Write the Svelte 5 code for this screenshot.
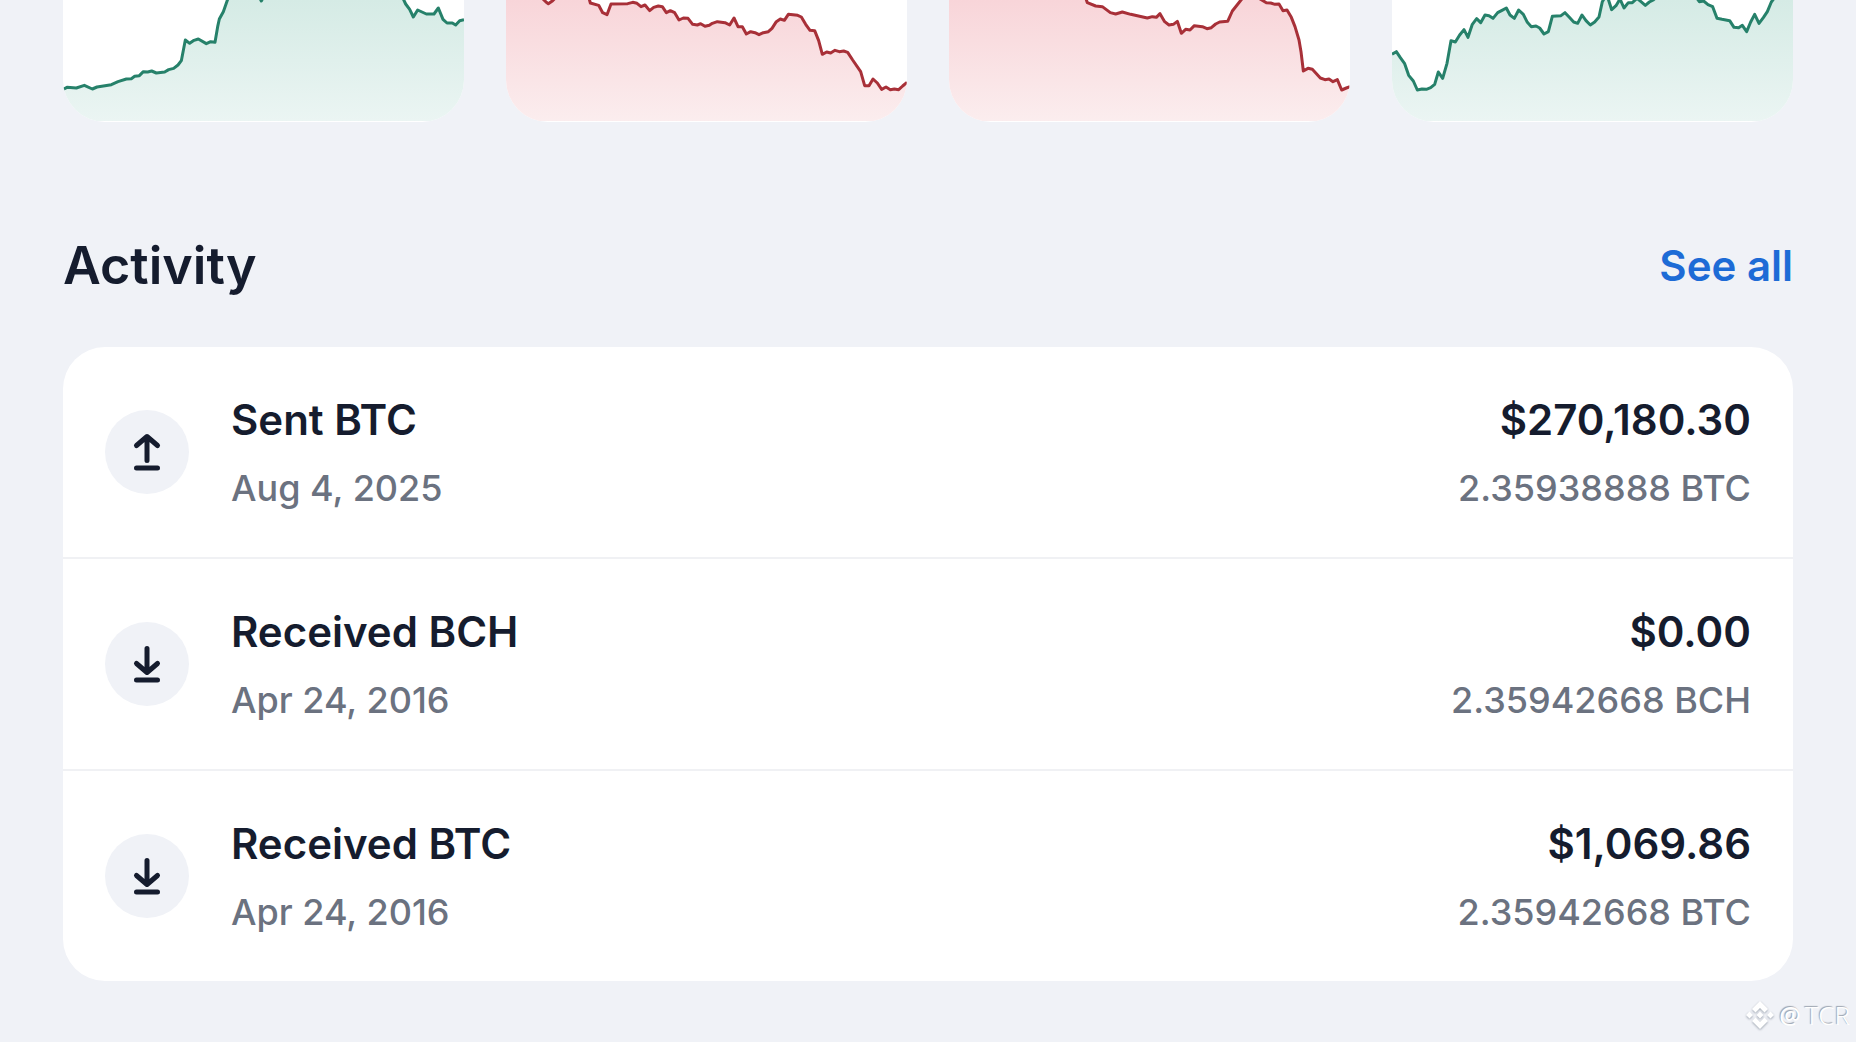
<script lang="ts">
  type Trend = 'up' | 'down'
  type Entry = { kind: 'sent' | 'received'; coin: string; date: string; fiat: string; amount: string }

  // Sparkline vertices, in a 1203 x 363 box. Values above the box are clipped.
  const charts: { name: string; trend: Trend; line: string }[] = [
    {
      name: 'Price chart 1',
      trend: 'up',
      line: '0,268 12,262 40,264 64,256 88,267 102,261 145,254 165,245 190,237 205,236 215,229 229,227 241,215 254,216 266,213 280,219 305,216 317,209 332,205 345,195 355,182 367,120 380,130 393,121 406,117 430,131 443,125 456,127 464,80 469,57 481,35 494,-2 510,-30 585,-16 595,3 605,-16 1010,-30 1020,-5 1028,12 1040,28 1051,51 1064,30 1090,42 1113,42 1126,24 1140,58 1152,69 1168,69 1178,75 1190,62 1203,59'
    },
    {
      name: 'Price chart 2',
      trend: 'down',
      line: '0,-30 108,-6 120,6 127,11 140,2 150,-8 245,-20 253,9 278,16 290,38 303,44 315,12 365,11 380,7 393,10 405,20 417,15 431,32 443,22 457,18 469,20 481,38 493,32 506,38 519,60 532,54 546,55 560,73 574,75 584,71 597,79 610,76 619,70 634,65 657,68 671,75 684,54 696,80 709,80 721,102 734,95 747,98 759,104 772,98 787,95 798,85 811,65 823,57 835,61 847,43 875,46 886,51 899,73 912,91 926,92 938,122 949,163 962,156 974,159 987,151 1000,155 1013,153 1025,157 1040,180 1064,215 1076,257 1089,257 1101,237 1114,249 1127,268 1140,261 1153,269 1165,267 1178,269 1190,258 1203,247'
    },
    {
      name: 'Price chart 3',
      trend: 'down',
      line: '0,-40 405,-20 415,8 440,18 460,20 484,38 500,42 520,36 545,43 595,54 610,50 622,52 633,41 647,65 660,75 673,73 685,64 697,100 710,88 723,90 736,77 760,80 774,86 787,83 800,72 812,66 836,64 850,33 876,0 890,-15 925,-8 952,8 965,9 978,13 990,12 1002,32 1014,30 1027,52 1038,80 1050,120 1056,155 1063,213 1077,205 1090,208 1114,234 1128,239 1140,237 1152,245 1165,239 1178,270 1192,264 1203,260'
    },
    {
      name: 'Price chart 4',
      trend: 'up',
      line: '0,163 13,155 25,173 38,191 50,226 64,243 76,270 90,267 103,268 116,263 128,253 139,216 152,235 165,190 177,122 190,126 203,105 216,89 228,112 241,73 254,56 266,68 279,45 291,47 303,55 317,38 330,31 343,24 354,45 367,55 380,30 394,43 406,67 418,80 432,78 443,84 456,102 469,95 481,49 507,47 519,38 532,52 545,66 557,70 570,45 582,62 595,75 608,66 621,51 631,5 640,-10 648,-5 659,29 672,17 684,-3 696,24 709,8 721,8 735,-5 747,5 760,16 772,6 784,0 800,-15 910,-12 922,5 935,3 948,14 962,20 975,55 990,58 1013,62 1026,82 1040,83 1051,76 1064,95 1076,66 1088,43 1101,70 1114,53 1126,35 1138,6 1150,-10 1203,-10'
    }
  ]

  const entries: Entry[] = [
    { kind: 'sent', coin: 'BTC', date: 'Aug 4, 2025', fiat: '$270,180.30', amount: '2.35938888' },
    { kind: 'received', coin: 'BCH', date: 'Apr 24, 2016', fiat: '$0.00', amount: '2.35942668' },
    { kind: 'received', coin: 'BTC', date: 'Apr 24, 2016', fiat: '$1,069.86', amount: '2.35942668' }
  ]

  const label = (e: Entry) => `${e.kind === 'sent' ? 'Sent' : 'Received'} ${e.coin}`
</script>

<main>
  <section class="charts" aria-label="Prices">
    {#each charts as c, i (c.name)}
      <div class="chart {c.trend}">
        <svg viewBox="0 0 1203 363" preserveAspectRatio="none" role="img" aria-label={c.name}>
          <defs>
            <linearGradient id="fade-{i}" x1="0" y1="0" x2="0" y2="363" gradientUnits="userSpaceOnUse">
              <stop class="from" offset="0" />
              <stop class="to" offset="1" />
            </linearGradient>
          </defs>
          <polygon points="0,363 {c.line} 1203,363" fill="url(#fade-{i})" />
          <polyline points={c.line} />
        </svg>
      </div>
    {/each}
  </section>

  <section>
    <header>
      <h2>Activity</h2>
      <a href="#activity">See all</a>
    </header>

    <ul>
      {#each entries as e, i (i)}
        <li>
          <span class="ic">
            <svg width="42" height="42" viewBox="0 0 42 42" fill="none" stroke="currentColor" stroke-width="5" stroke-linecap="round" stroke-linejoin="round" aria-hidden="true">
              {#if e.kind === 'sent'}
                <path d="M21 29.5V6M10.500 14.500L21 5.500l10.500 9M10.500 37h21" />
              {:else}
                <path d="M21 5.500V29M10.500 20.500L21 29.500l10.500-9M10.500 37h21" />
              {/if}
            </svg>
          </span>
          <div class="col">
            <span class="main">{label(e)}</span>
            <span class="sub">{e.date}</span>
          </div>
          <div class="col end">
            <span class="main">{e.fiat}</span>
            <span class="sub">{e.amount} {e.coin}</span>
          </div>
        </li>
      {/each}
    </ul>
  </section>

  <div class="mark">
    <svg width="30" height="30" viewBox="0 0 30 30" aria-hidden="true">
      <path d="M15 1l8 8-3.500 3.500L15 8l-4.500 4.500L7 9zM15 29l8-8-3.500-3.500L15 22l-4.500-4.500L7 21zM15 11.500l3.500 3.500-3.500 3.500-3.500-3.500zM4.500 11.500L8 15l-3.500 3.500L1 15zM25.500 11.500L29 15l-3.500 3.500L22 15z" />
    </svg>
    <span class="at">@</span>
    <span>TCR</span>
  </div>
</main>

<style>
  :global(body) {
    margin: 0;
    background: #f0f2f7;
  }
  main {
    position: relative;
    padding: 0 63px 61px;
    font-family: Inter, 'Liberation Sans', sans-serif;
    color: #151c2e;
  }
  .charts {
    display: grid;
    grid-template-columns: repeat(4, 1fr);
    gap: 42px;
  }
  .chart {
    height: 121px;
    padding-bottom: 1px;
    overflow: hidden;
    background: #fff;
    border-radius: 0 0 42px 42px;
  }
  .chart svg {
    display: block;
    width: 100%;
    height: 100%;
  }
  .chart polyline {
    fill: none;
    stroke-width: 3px;
    stroke-linejoin: round;
    vector-effect: non-scaling-stroke;
  }
  .up polyline { stroke: #26816a; }
  .up .from { stop-color: #d5ebe5; }
  .up .to { stop-color: #ebf5f3; }
  .down polyline { stroke: #a83038; }
  .down .from { stop-color: #f8d5d9; }
  .down .to { stop-color: #fbedee; }

  header {
    display: flex;
    align-items: center;
    justify-content: space-between;
    margin: 112px 0 49px;
  }
  h2 {
    margin: 0;
    font-size: 52px;
    line-height: 64px;
    font-weight: 600;
  }
  header a {
    font-size: 42px;
    line-height: 64px;
    font-weight: 600;
    color: #1d6bd6;
    text-decoration: none;
  }

  ul {
    margin: 0;
    padding: 0;
    list-style: none;
    background: #fff;
    border-radius: 42px;
  }
  li {
    display: flex;
    align-items: center;
    gap: 42px;
    padding: 40px 42px;
  }
  li + li {
    border-top: 2px solid #f0f1f4;
  }
  .ic {
    flex: none;
    display: grid;
    place-items: center;
    width: 84px;
    height: 84px;
    border-radius: 50%;
    background: #f0f2f7;
  }
  .col {
    display: flex;
    flex-direction: column;
    gap: 6px;
    white-space: nowrap;
  }
  .end {
    margin-left: auto;
    text-align: right;
  }
  .main {
    font-size: 42px;
    line-height: 66px;
    font-weight: 600;
  }
  .sub {
    font-size: 36px;
    line-height: 58px;
    font-weight: 500;
    color: #6b7280;
  }

  .mark {
    position: absolute;
    right: 6px;
    bottom: 10px;
    display: flex;
    align-items: center;
    gap: 4px;
    font: 300 26px/34px 'Noto Sans', sans-serif;
    color: #fff;
    text-shadow: -1px -1px 1px #9aa2ae;
  }
  .mark svg {
    fill: #fff;
    filter: drop-shadow(0 1px 1px #9aa2ae);
  }
  .at {
    font-size: 24px;
    font-weight: 500;
  }
</style>
